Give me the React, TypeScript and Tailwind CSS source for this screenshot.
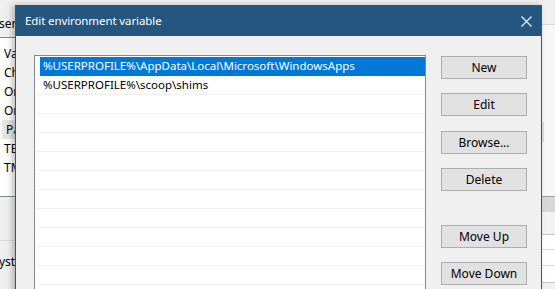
import React from 'react';

const paths = [
  '%USERPROFILE%\\AppData\\Local\\Microsoft\\WindowsApps',
  '%USERPROFILE%\\scoop\\shims',
];

const buttons: { label: string; gap: string }[] = [
  { label: 'New', gap: 'mt-0' },
  { label: 'Edit', gap: 'mt-[14px]' },
  { label: 'Browse...', gap: 'mt-[15px]' },
  { label: 'Delete', gap: 'mt-[14px]' },
  { label: 'Move Up', gap: 'mt-[34px]' },
  { label: 'Move Down', gap: 'mt-[14px]' },
];

const font = { fontFamily: '"Noto Sans", "Segoe UI", sans-serif' };

/** The Environment Variables window peeking out on the left */
function LeftBackdrop() {
  const vars = ['Va', 'Ch', 'On', 'On', 'Pa', 'TE', 'TM'];
  return (
    <div className="w-[15px] shrink-0 h-full bg-[#f0f0f0] overflow-hidden text-[12px] text-black">
      <div className="h-[37px] pt-[15px] whitespace-nowrap -ml-[1px]">ser</div>
      <div className="h-[160px] bg-white border-t border-b border-[#828790]">
        <div className="pt-[6px]">
          {vars.map((v, i) => (
            <div
              key={i}
              className={`h-[19px] leading-[19px] pl-[4px] ${i === 4 ? 'bg-[#e5e5e5] ml-[2px] pl-[2px]' : ''}`}
            >
              {v}
            </div>
          ))}
        </div>
      </div>
      <div className="h-[44px] border-b border-[#dadada]" />
      <div className="h-[40px] pt-[12px] -ml-[1px] whitespace-nowrap">ystem</div>
    </div>
  );
}

/** The Environment Variables window peeking out on the right */
function RightBackdrop() {
  return (
    <div className="flex-1 h-full bg-[#f0f0f0] overflow-hidden">
      <div className="h-[25px] border-b border-[#d9d9d9]" />
      <div className="h-[171px] flex">
        <div className="w-[2px] bg-[#f5f5f5]">
          <div className="mt-[97px] h-[20px] bg-[#dcdcdc]" />
        </div>
        <div className="flex-1 bg-[#f7f7f7]" />
      </div>
      <div className="h-[16px] border-t border-[#a0a0a0] bg-[#d8d8d8]" />
      <div className="h-[23px] border-b border-[#c8c8c8] bg-[#f2f2f2]" />
      <div className="h-[15px] border-b border-[#dcdcdc] bg-white" />
      <div className="h-[16px] border-b border-[#dcdcdc] bg-white" />
      <div className="h-[17px] border-b border-[#c8c8c8] bg-white" />
    </div>
  );
}

function PathList() {
  const rows = Array.from({ length: 13 }, (_, i) => paths[i] ?? '');
  return (
    <div className="w-[392px] h-[260px] shrink-0 bg-white border border-[#828790] pt-[1px] overflow-hidden text-[11.5px]">
      {rows.map((p, i) => (
        <div key={i} className="ml-[1px] h-[19px] border-b border-[#f0f0f0]">
          {i === 0 ? (
            <div className="ml-[4px] h-[19px] -mb-[1px] bg-[#0078d7] text-white pl-[3px] leading-[18px] whitespace-nowrap">
              {p}
            </div>
          ) : (
            <div className="ml-[4px] pl-[3px] leading-[18px] text-black whitespace-nowrap">{p}</div>
          )}
        </div>
      ))}
    </div>
  );
}

function CloseIcon() {
  return (
    <svg width="11" height="11" viewBox="0 0 11 11" className="block">
      <path d="M0.5 0.5 L10.5 10.5 M10.5 0.5 L0.5 10.5" stroke="white" strokeWidth="1.1" />
    </svg>
  );
}

export default function App() {
  return (
    <div className="w-[555px] h-[289px] overflow-hidden flex items-start bg-[#f0f0f0] text-[12px]" style={font}>
      <LeftBackdrop />

      <div className="w-[527px] shrink-0 mt-[5px] h-[330px] flex flex-col border-x border-t border-[#2a5a86] bg-[#f0f0f0] shadow-[-3px_0_6px_rgba(0,0,0,0.25)] relative z-10">
        <div className="h-[30px] shrink-0 bg-[#24567f] flex items-center justify-between pl-[9px] pr-[9px]">
          <span className="text-white text-[11.5px] tracking-[-0.1px]">Edit environment variable</span>
          <CloseIcon />
        </div>

        <div className="flex pt-[19px] pl-[18px]">
          <PathList />

          <div className="ml-[15px] flex flex-col pt-[1px]">
            {buttons.map(b => (
              <button
                key={b.label}
                className={`${b.gap} w-[86px] h-[23px] bg-[#e1e1e1] border border-[#adadad] text-black text-[12px] leading-none`}
              >
                {b.label}
              </button>
            ))}
          </div>
        </div>
      </div>

      <div className="h-full flex-1 self-stretch">
        <RightBackdrop />
      </div>
    </div>
  );
}
